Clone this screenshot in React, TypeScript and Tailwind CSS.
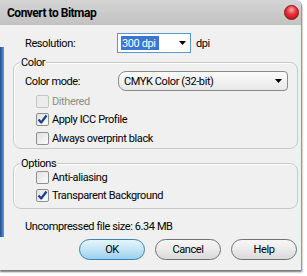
import React from "react";

const font = { fontFamily: '"Roboto", "Liberation Sans", sans-serif', letterSpacing: "-0.4px" };

function Check({ checked = false, disabled = false }: { checked?: boolean; disabled?: boolean }) {
  return (
    <div
      className={`w-[13px] h-[13px] shrink-0 rounded-[2px] border flex items-center justify-center ${
        disabled ? "border-[#c4c4c4] bg-[#ececec]" : "border-[#8f8f8f] bg-gradient-to-br from-[#e2e2e2] to-[#fbfbfb]"
      }`}
    >
      {checked && (
        <svg width="11" height="11" viewBox="0 0 11 11">
          <path d="M1.5 5.5 L4.2 8.5 L9.5 1.5" fill="none" stroke="#1c3f94" strokeWidth="2.2" strokeLinejoin="round" />
        </svg>
      )}
    </div>
  );
}

function CheckRow({ label, checked, disabled }: { label: string; checked?: boolean; disabled?: boolean }) {
  return (
    <div className="flex items-center h-[18.5px] pl-[22px]">
      <Check checked={checked} disabled={disabled} />
      <span className={`ml-[3px] whitespace-nowrap ${disabled ? "text-[#8d8d8d]" : "text-black"}`}>{label}</span>
    </div>
  );
}

function Btn({ label, primary }: { label: string; primary?: boolean }) {
  return (
    <div
      className={`w-[66px] h-[21px] rounded-full border flex items-center justify-center text-black ${
        primary
          ? "border-[#3c7fb1] bg-gradient-to-b from-[#e5f4fc] via-[#c4e5f6] to-[#98d1ef]"
          : "border-[#707070] bg-gradient-to-b from-[#f6f6f6] via-[#ebebeb] to-[#d9d9d9]"
      }`}
    >
      {label}
    </div>
  );
}

function Arrow() {
  return (
    <svg width="7" height="4" viewBox="0 0 7 4">
      <path d="M0 0 H7 L3.5 4 Z" fill="#000" />
    </svg>
  );
}

export default function App() {
  return (
    <div className="w-[307px] h-[276px] bg-white overflow-hidden text-[11px] leading-none" style={font}>
      <div className="w-[302px] h-[270px] flex flex-col border-r border-[#7f9db9] rounded-tr-[6px] shadow-[0_2px_2px_rgba(0,0,0,0.55)]">
        {/* title bar */}
        <div className="h-[25px] shrink-0 flex items-center justify-between bg-gradient-to-b from-[#d4d4d4] to-[#c2c2c2] rounded-tr-[6px] pl-[7px] pr-[2px]">
          <span className="font-bold text-[12px] text-black tracking-[-0.5px]">Convert to Bitmap</span>
          <div className="w-[15px] h-[15px] rounded-full bg-[radial-gradient(circle_at_50%_30%,#ffb0b0_0%,#f0323a_40%,#a30c12_100%)] border border-[#8a1010]" />
        </div>
        {/* body */}
        <div className="flex-1 flex bg-[#f0f0f0]">
          <div className="w-[4px] shrink-0 flex flex-col">
            <div className="h-[22px]" />
            <div className="h-[190px] bg-gradient-to-r from-[#1e4f8f] to-[#5f9bd6]" />
          </div>
          <div className="flex-1 flex flex-col pl-[9px] pr-[3px]">
            {/* resolution */}
            <div className="flex items-center mt-[8px] h-[20px]">
              <span className="w-[104px] pl-[12px]">Resolution:</span>
              <div className="w-[74px] h-[20px] bg-white border border-[#5b97cf] flex items-center pl-[3px] pr-[4px] justify-between">
                <span className="bg-[#3a76d6] text-white h-[14px] flex items-center w-[38px] whitespace-nowrap pl-[1px]">300 dpi</span>
                <Arrow />
              </div>
              <span className="ml-[5px]">dpi</span>
            </div>
            {/* Color group */}
            <div className="relative mt-[9px] h-[87px] border border-[#c9c9c9] rounded-[8px] shadow-[inset_1px_1px_0_#fff]">
              <span className="absolute left-[6px] top-[-6px] bg-[#f0f0f0] px-[1px]">Color</span>
              <div className="flex items-center mt-[8px] h-[20px]">
                <span className="w-[104px] pl-[11px]">Color mode:</span>
                <div className="w-[170px] h-[20px] rounded-l-[8px] rounded-r-[4px] border border-[#8a8a8a] bg-gradient-to-b from-[#fcfcfc] to-[#e8e8e8] flex items-center justify-between pl-[5px] pr-[5px]">
                  <span>CMYK Color (32-bit)</span>
                  <Arrow />
                </div>
              </div>
              <div className="mt-[1px] flex flex-col">
                <CheckRow label="Dithered" disabled />
                <CheckRow label="Apply ICC Profile" checked />
                <CheckRow label="Always overprint black" />
              </div>
            </div>
            {/* Options group */}
            <div className="relative mt-[14px] h-[46px] border border-[#c9c9c9] rounded-[8px] shadow-[inset_1px_1px_0_#fff]">
              <span className="absolute left-[6px] top-[-6px] bg-[#f0f0f0] px-[1px]">Options</span>
              <div className="mt-[4px] flex flex-col">
                <CheckRow label="Anti-aliasing" />
                <CheckRow label="Transparent Background" checked />
              </div>
            </div>
            <div className="mt-[11px] pl-[12px] h-[12px] flex items-center">Uncompressed file size: 6.34 MB</div>
            <div className="mt-[7px] flex justify-end gap-[10px] pr-[1px]">
              <Btn label="OK" primary />
              <Btn label="Cancel" />
              <Btn label="Help" />
            </div>
          </div>
        </div>
      </div>
    </div>
  );
}
